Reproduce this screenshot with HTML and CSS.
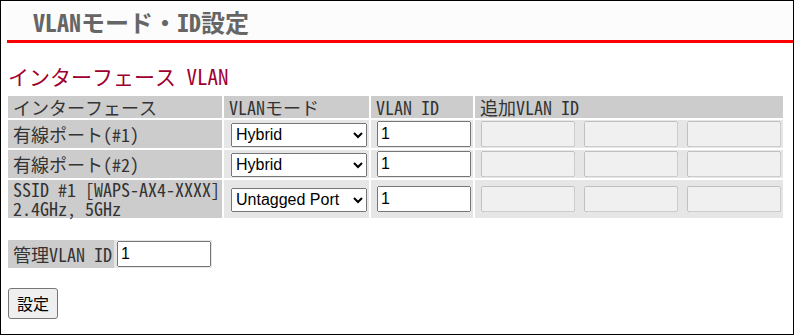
FILE: index.html
```html
<!DOCTYPE html>
<html lang="ja">
<head>
    <meta charset="UTF-8">
    <meta name="viewport" content="width=device-width, initial-scale=1.0">
    <title>VLANモード・ID設定</title>
    <link rel="stylesheet" href="styles.css">
</head>
<body>
    <div class="page">
        <div class="head">
            <h1>VLANモード・ID設定</h1>
        </div>
        <div class="main">
            <h2>インターフェース VLAN</h2>
            <table class="vlan-table">
                <tr>
                    <th class="c-if">インターフェース</th>
                    <th class="c-mode">VLANモード</th>
                    <th class="c-id">VLAN ID</th>
                    <th class="c-add">追加VLAN ID</th>
                </tr>
                <tr>
                    <td class="label">有線ポート(#1)</td>
                    <td class="ctrl"><select class="mode"><option>Hybrid</option></select></td>
                    <td class="ctrl"><input class="vid" type="text" value="1"></td>
                    <td class="ctrl"><div class="extra"><input type="text" disabled><input type="text" disabled><input type="text" disabled></div></td>
                </tr>
                <tr>
                    <td class="label">有線ポート(#2)</td>
                    <td class="ctrl"><select class="mode"><option>Hybrid</option></select></td>
                    <td class="ctrl"><input class="vid" type="text" value="1"></td>
                    <td class="ctrl"><div class="extra"><input type="text" disabled><input type="text" disabled><input type="text" disabled></div></td>
                </tr>
                <tr>
                    <td class="label two"><div>SSID #1 [WAPS-AX4-XXXX]</div><div>2.4GHz, 5GHz</div></td>
                    <td class="ctrl"><select class="mode"><option>Untagged Port</option></select></td>
                    <td class="ctrl"><input class="vid" type="text" value="1"></td>
                    <td class="ctrl"><div class="extra"><input type="text" disabled><input type="text" disabled><input type="text" disabled></div></td>
                </tr>
            </table>
            <table class="mgmt-table">
                <tr>
                    <td class="label">管理VLAN ID</td>
                    <td class="ctrl"><input class="vid" type="text" value="1"></td>
                </tr>
            </table>
            <button class="submit-btn">設定</button>
        </div>
    </div>
</body>
</html>
```

FILE: styles.css
```css
body { margin: 0; font-family: "Noto Sans Mono CJK JP", "Noto Sans CJK JP", monospace; color: #333; background: #fff; }
.page { width: 794px; height: 335px; box-sizing: border-box; border: 1px solid #000; overflow: hidden; }
.head { margin: 3px 0 0 6px; height: 36px; background: #fcfcfc; border-bottom: 3px solid #f00; }
.head h1 { margin: 0; padding-left: 26px; font-size: 24px; line-height: 36px; font-weight: bold; color: #666; }
.main { padding: 0 7px; }
.main h2 { margin: 21px 0 0; font-size: 21px; line-height: 24px; font-weight: normal; color: #a00030; }
.vlan-table { margin: 6px 0 0 -2px; border-spacing: 2px; table-layout: fixed; width: 777px; }
.vlan-table th, .vlan-table td { box-sizing: border-box; font-size: 18px; line-height: 20px; text-align: left; font-weight: normal; }
.vlan-table th { background: #ccc; padding: 1px 5px; }
.c-if { width: 214px; }
.c-mode { width: 145px; }
.c-id { width: 102px; }
.c-add { width: 308px; }
td.label { background: #ccc; padding: 1px 5px; white-space: nowrap; }
.vlan-table td.label.two { line-height: 19px; padding: 0 5px; }
td.ctrl { background: #e6e6e6; padding: 1px 1px 1px 6px; }
.mode { width: 136px; height: 24px; margin-left: 1px; font-family: Arial, "Liberation Sans", sans-serif; font-size: 16px; color: #000; vertical-align: middle; }
.vid { width: 94px; height: 26px; box-sizing: border-box; font-family: Arial, "Liberation Sans", sans-serif; font-size: 16px; color: #000; vertical-align: middle; margin: 0; }
.extra { display: flex; gap: 9px; }
.extra input { width: 94px; height: 26px; box-sizing: border-box; margin: 0; }
.mgmt-table { margin-top: 20px; border-spacing: 0; }
.mgmt-table td { font-size: 18px; line-height: 20px; }
.mgmt-table td.label { padding: 4px 2px 4px 5px; }
.mgmt-table td.ctrl { padding: 1px 1px 1px 3px; }
.submit-btn { margin-top: 20px; width: 50px; height: 31px; padding: 0 0 2px; font-family: "Noto Sans CJK JP", sans-serif; font-size: 16px; color: #000; background: #efefef; border: 1px solid #767676; border-radius: 3px; }
```
